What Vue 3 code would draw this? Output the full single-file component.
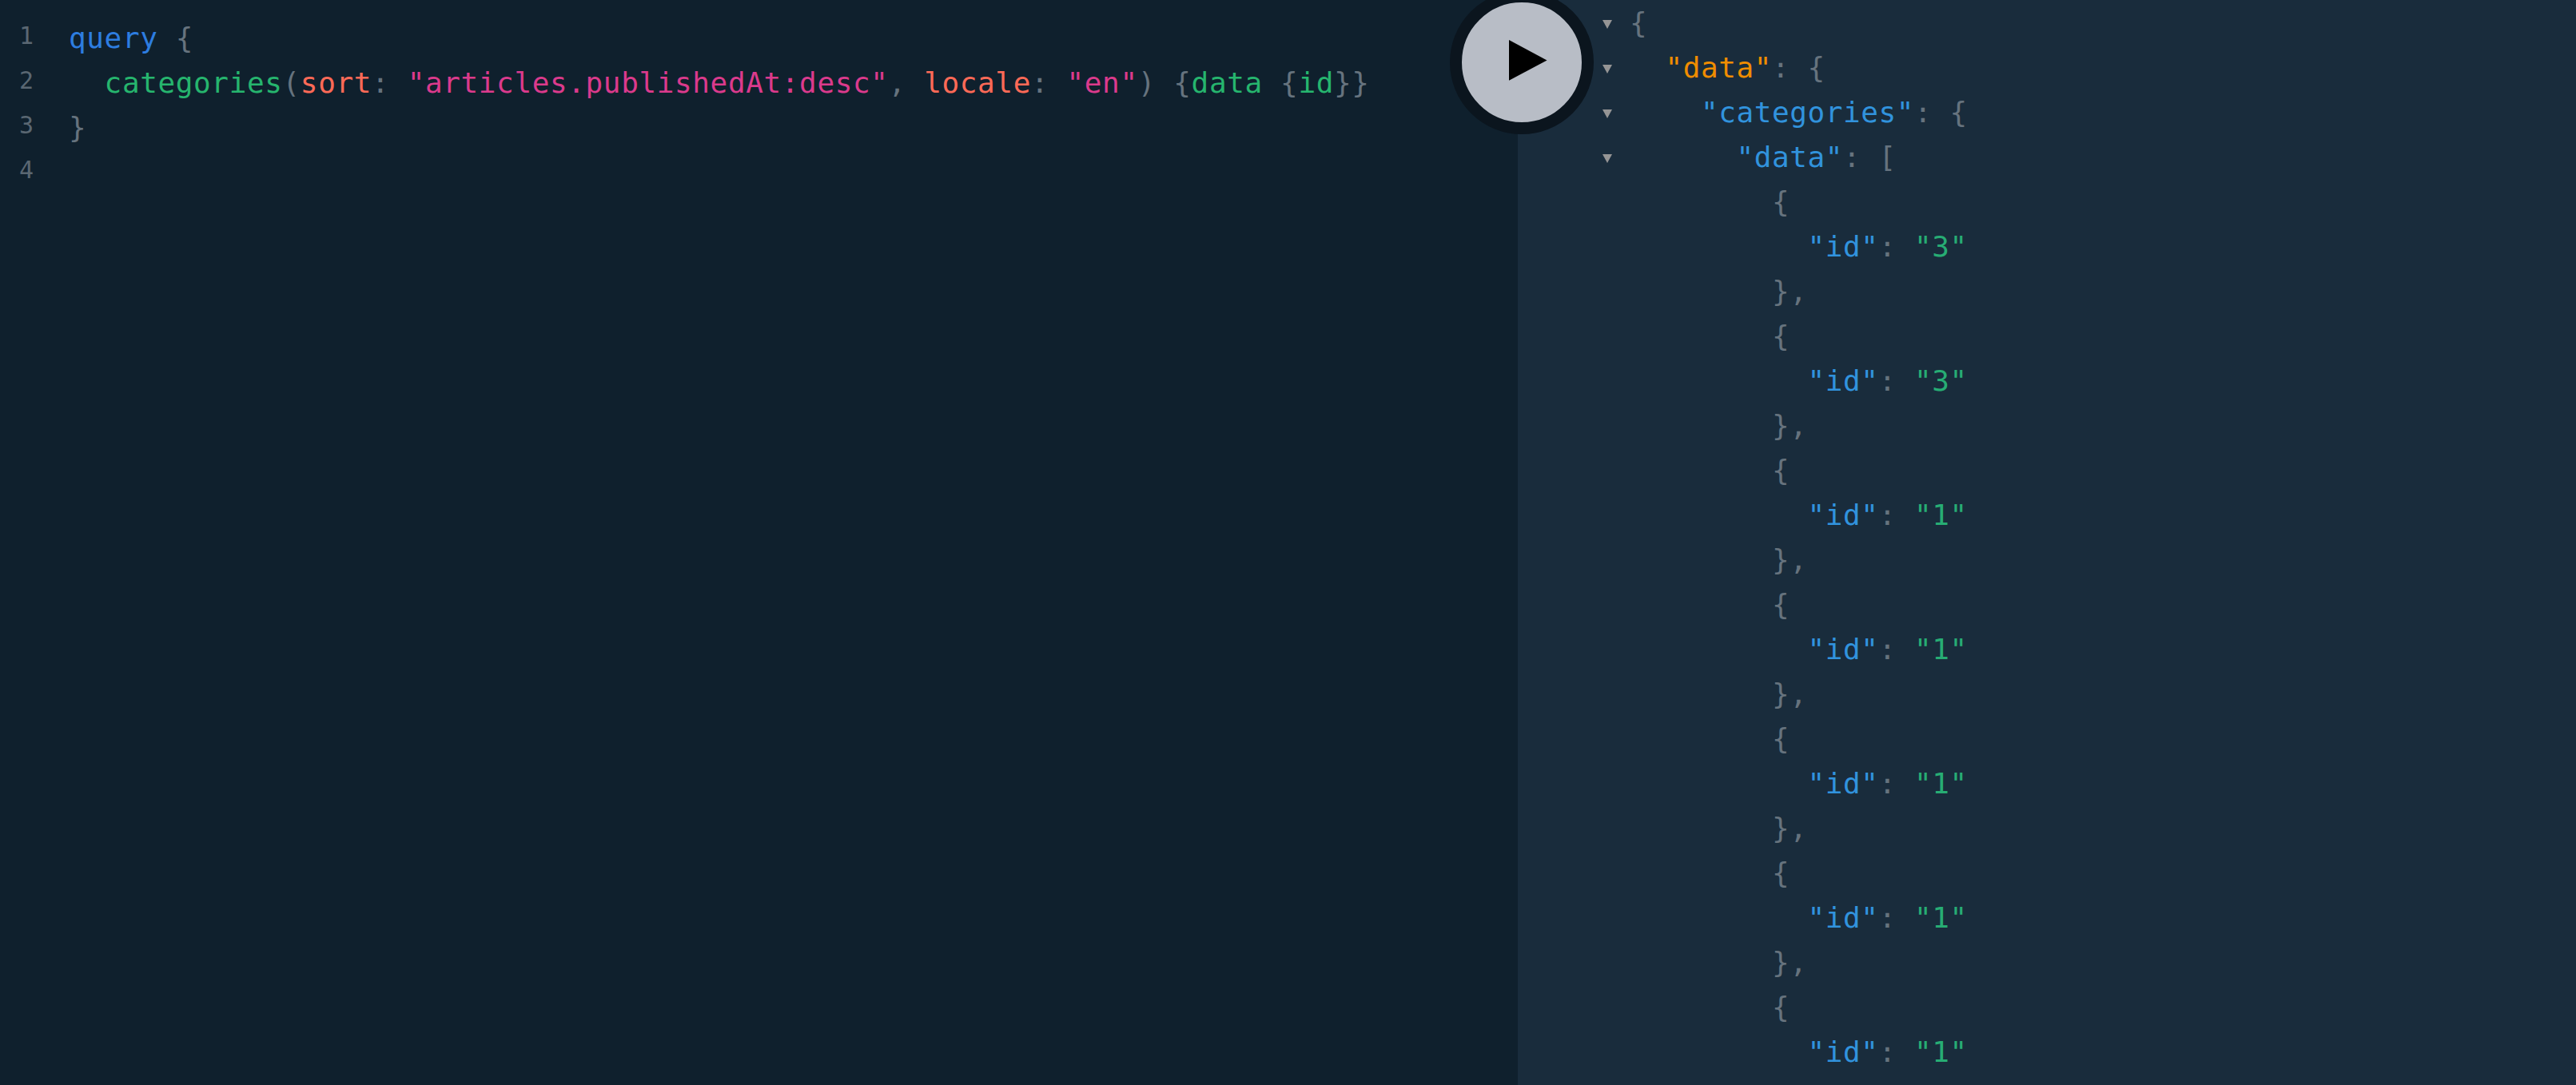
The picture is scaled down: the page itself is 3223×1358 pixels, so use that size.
<script setup>
const queryLines = [
  [['kw', 'query'], ['p', ' {']],
  [['p', '  '], ['fn', 'categories'], ['p', '('], ['arg', 'sort'], ['p', ': '], ['str', '"articles.publishedAt:desc"'], ['p', ', '], ['arg', 'locale'], ['p', ': '], ['str', '"en"'], ['p', ') {'], ['fn', 'data'], ['p', ' {'], ['fn', 'id'], ['p', '}}']],
  [['p', '}']],
  [],
]
const ids = ['3', '3', '1', '1', '1', '1', '1']
const allLines = [
  { fold: true, tokens: [['p', '{']] },
  { fold: true, tokens: [['p', '  '], ['top', '"data"'], ['p', ': {']] },
  { fold: true, tokens: [['p', '    '], ['key', '"categories"'], ['p', ': {']] },
  { fold: true, tokens: [['p', '      '], ['key', '"data"'], ['p', ': [']] },
]
ids.forEach((id) => {
  allLines.push({ tokens: [['p', '        {']] })
  allLines.push({ tokens: [['p', '          '], ['key', '"id"'], ['p', ': '], ['val', `"${id}"`]] })
  allLines.push({ tokens: [['p', '        },']] })
})
const resultLines = allLines.slice(0, 24)
</script>

<template>
  <div class="app">
    <section class="editor">
      <div v-for="(line, i) in queryLines" :key="i" class="qline">
        <span class="num">{{ i + 1 }}</span>
        <span class="code"><span v-for="(t, j) in line" :key="j" :class="t[0]">{{ t[1] }}</span></span>
      </div>
    </section>
    <section class="result">
      <div v-for="(line, i) in resultLines" :key="i" class="rline">
        <span class="gutter"><svg v-if="line.fold" class="arrow" viewBox="0 0 12 11" width="12" height="11"><path d="M0 0H12L6 11Z" /></svg></span>
        <span class="code"><span v-for="(t, j) in line.tokens" :key="j" :class="t[0]">{{ t[1] }}</span></span>
      </div>
    </section>
    <button class="play" aria-label="Run">
      <svg viewBox="0 0 48 51" width="48" height="51"><path d="M0 0L47.5 25.4L0 50.8Z" /></svg>
    </button>
  </div>
</template>

<style>
html, body { margin: 0; overflow: hidden; background: #0f202d; }
</style>

<style scoped>
.app {
  position: relative;
  display: flex;
  height: 100vh;
  overflow: hidden;
  font-family: "DejaVu Sans Mono", monospace;
  font-size: 36px;
  line-height: 56px;
  color: #66737e;
}
.editor {
  flex: 0 0 1899px;
  box-sizing: border-box;
  padding-top: 20px;
  background: #0f202d;
}
.result {
  flex: 1;
  box-sizing: border-box;
  padding-top: 1px;
  background: #192c3c;
  overflow: hidden;
}
.qline, .rline {
  display: flex;
  height: 56px;
  white-space: pre;
}
.num {
  flex: 0 0 86px;
  box-sizing: border-box;
  padding-left: 24px;
  font-size: 30px;
  line-height: 50px;
  color: #5a6772;
}
.gutter {
  flex: 0 0 140px;
  display: flex;
  justify-content: flex-end;
  padding-right: 22px;
  box-sizing: border-box;
  align-items: flex-start;
}
.arrow {
  margin-top: 24px;
  fill: #959595;
}
.code { letter-spacing: 0.58px; }
.qline .code { letter-spacing: 0.62px; }
.kw { color: #2d7de0; }
.fn { color: #26b56e; }
.arg { color: #ff6a57; }
.str { color: #db3a8c; }
.key { color: #3193dd; }
.top { color: #f08d00; }
.val { color: #27ad74; }
.play {
  position: absolute;
  left: 1814px;
  top: -12px;
  width: 180px;
  height: 180px;
  box-sizing: border-box;
  padding: 0 0 5px 15px;
  border: 15px solid #0b151e;
  border-radius: 50%;
  background: #b8bdc6;
  display: flex;
  align-items: center;
  justify-content: center;
}
.play svg { fill: #000; display: block; }
</style>
